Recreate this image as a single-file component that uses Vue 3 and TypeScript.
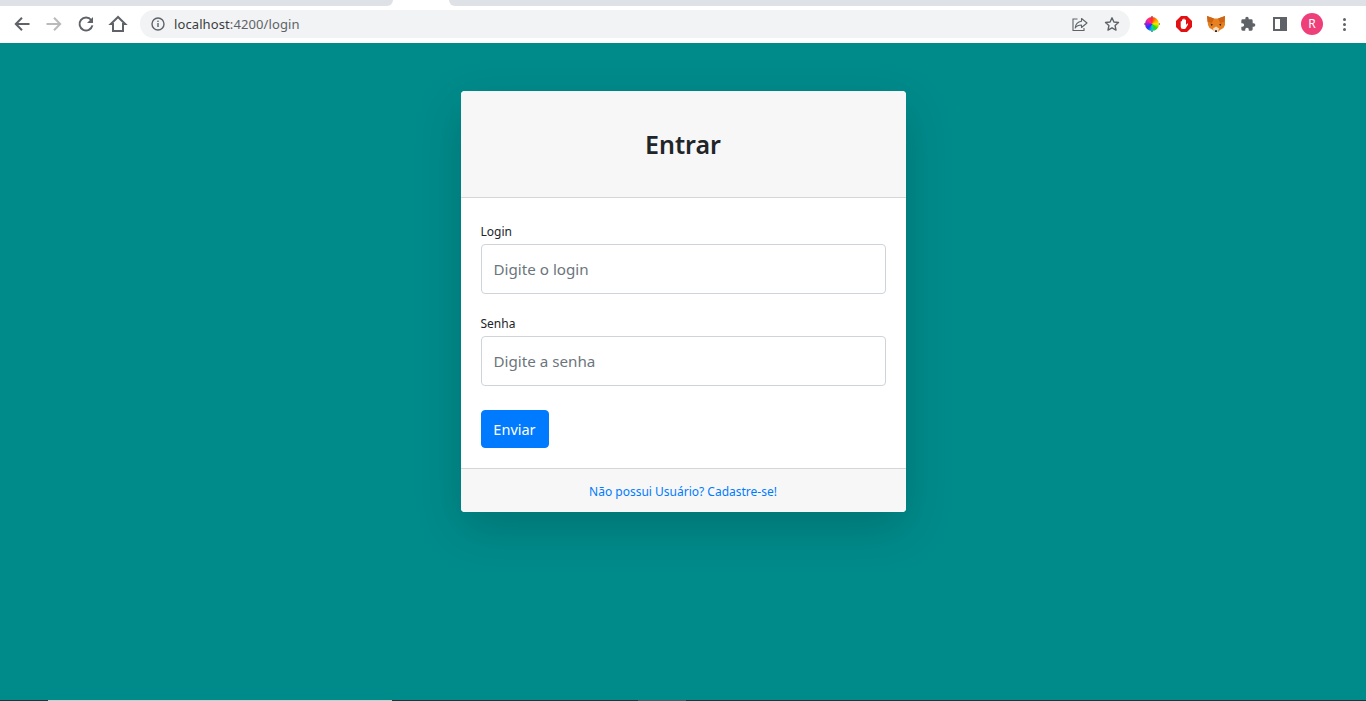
<script setup lang="ts">
const url = { host: 'localhost', rest: ':4200/login' }
</script>

<template>
  <div class="screen">
    <div class="tabstrip">
      <div class="tab-gray left"></div>
      <div class="tab-active"></div>
      <div class="tab-gray right"></div>
    </div>
    <header class="toolbar">
      <div class="nav">
        <svg class="ic" viewBox="0 0 20 20"><path d="M17.500 10H4.500M10 3.800 3.800 10l6.200 6.200" fill="none" stroke="#5f6368" stroke-width="2"/></svg>
        <svg class="ic" viewBox="0 0 20 20"><path d="M2.500 10h13M10 3.800l6.200 6.200-6.200 6.200" fill="none" stroke="#bababa" stroke-width="2"/></svg>
        <svg class="ic" viewBox="0 0 20 20"><path d="M15.200 6A6.500 6.500 0 1 0 16.400 11.400" fill="none" stroke="#5f6368" stroke-width="2"/><path d="M17 3v6h-6z" fill="#5f6368"/></svg>
        <svg class="ic" viewBox="0 0 20 20"><path d="M10 3 2.800 10H5v7h10v-7h2.200z" fill="none" stroke="#5f6368" stroke-width="2" stroke-linejoin="miter"/></svg>
      </div>
      <div class="omnibox">
        <svg class="info" viewBox="0 0 16 16"><circle cx="8" cy="8" r="6" fill="none" stroke="#5f6368" stroke-width="1.4"/><rect x="7.300" y="7" width="1.400" height="4" fill="#5f6368"/><rect x="7.300" y="4.600" width="1.400" height="1.400" fill="#5f6368"/></svg>
        <span class="url"><span class="host">{{ url.host }}</span>{{ url.rest }}</span>
        <span class="spacer"></span>
        <svg class="ic small" viewBox="0 0 16 16"><path d="M9.500 2.500 15 7l-5.500 4.500V9C6.500 9 4.500 10 3.200 12 3.500 8.500 5.500 5.700 9.500 5.200z" fill="none" stroke="#5f6368" stroke-width="1.100" stroke-linejoin="round"/><path d="M5.500 3H1v11.500h11V12" fill="none" stroke="#5f6368" stroke-width="1.100"/></svg>
        <svg class="ic small star" viewBox="0 0 16 16"><path d="m8 1.800 1.900 4.200 4.600.5-3.400 3.100.9 4.500L8 11.800l-4 2.300.9-4.500L1.500 6.500l4.600-.5z" fill="none" stroke="#5f6368" stroke-width="1.400" stroke-linejoin="round"/></svg>
      </div>
      <div class="extensions">
        <div class="ext">
          <div class="wheel-wrap">
            <svg class="wheel-tips" viewBox="0 0 16 16"><path d="M7.200 0h1.600v2H7.200zM7.200 14h1.600v2H7.200zM0 7.200h2v1.600H0zM14 7.200h2v1.600h-2z" fill="#777"/></svg>
            <div class="wheel"></div>
          </div>
        </div>
        <div class="ext">
          <svg class="ext-svg" viewBox="0 0 16 16"><path d="M5 0h6l5 5v6l-5 5H5l-5-5V5z" fill="#e20f13"/><path d="M4.700 8.500V5.500a.7.7 0 0 1 1.300 0V7.500V3.800a.7.7 0 0 1 1.300 0V7V3.200a.7.7 0 0 1 1.400 0V7V3.900a.7.7 0 0 1 1.300 0V9l1-1.200c.6-.6 1.400 0 1 .6L9.800 12.300a1.600 1.600 0 0 1-1.300.7H7a2.300 2.300 0 0 1-2.300-2.300z" fill="#fff"/></svg>
        </div>
        <div class="ext">
          <svg class="ext-svg fox" viewBox="0 0 18 16"><path d="M0 0 7 2.500h4L18 0v9l-1.500 3-3.500 2-2 2H8l-2-2-3.500-2L1 9z" fill="#e8801f"/><path d="M0 0 7 2.500 5 7 .6 6z" fill="#cf6415"/><path d="M18 0 11 2.500 13 7l4.400-1z" fill="#cf6415"/><path d="M6 12.500 9 10.500l3 2-1 3.500H7z" fill="#f3d9bf"/><path d="M3.500 7.500l2.500 1-1.500 1.500z M14.500 7.500l-2.500 1 1.500 1.500z" fill="#33261c"/><path d="M8 14.200h2V16H8z" fill="#33261c"/></svg>
        </div>
        <div class="ext">
          <svg class="ext-svg puzzle" viewBox="0 0 24 24"><path d="M20.500 11H19V7a2 2 0 0 0-2-2h-4V3.500a2.500 2.500 0 0 0-5 0V5H4a2 2 0 0 0-2 2v3.800h1.500a2.700 2.700 0 0 1 0 5.400H2V20a2 2 0 0 0 2 2h3.800v-1.500a2.700 2.700 0 0 1 5.400 0V22H17a2 2 0 0 0 2-2v-4h1.500a2.500 2.500 0 0 0 0-5z" fill="#5f6368"/></svg>
        </div>
        <div class="ext"><div class="sidepanel"><div class="sidepanel-open"></div></div></div>
        <div class="ext"><div class="avatar">R</div></div>
        <div class="ext kebab"><i></i><i></i><i></i></div>
      </div>
    </header>
    <main class="page">
      <section class="card">
        <div class="card-header"><h1>Entrar</h1></div>
        <div class="card-body">
          <div class="group">
            <label for="login">Login</label>
            <input id="login" type="text" placeholder="Digite o login" />
          </div>
          <div class="group">
            <label for="senha">Senha</label>
            <input id="senha" type="password" placeholder="Digite a senha" />
          </div>
          <button type="button">Enviar</button>
        </div>
        <div class="card-footer"><a href="#">Não possui Usuário? Cadastre-se!</a></div>
      </section>
    </main>
    <div class="taskbar">
      <div class="tb dark a"></div>
      <div class="tb light"></div>
      <div class="tb dark b"></div>
      <div class="tb mid"></div>
      <div class="tb dark c"></div>
    </div>
  </div>
</template>

<style>
html, body { margin: 0; padding: 0; overflow: hidden; }
</style>

<style scoped>
.screen {
  width: 1366px;
  height: 701px;
  display: flex;
  flex-direction: column;
  font-family: "Noto Sans", "Open Sans", sans-serif;
  overflow: hidden;
}
.tabstrip { height: 6px; display: flex; background: #fff; flex: none; }
.tab-gray { background: #dee1e6; height: 6px; }
.tab-gray.left { width: 393px; border-bottom-right-radius: 6px; }
.tab-active { width: 56px; background: #fff; }
.tab-gray.right { flex: 1; border-bottom-left-radius: 6px; }
.toolbar {
  height: 37px;
  background: #fff;
  display: flex;
  align-items: center;
  flex: none;
  box-sizing: border-box;
  padding-bottom: 1px;
}
.nav { display: flex; width: 140px; padding-left: 12px; box-sizing: border-box; gap: 12px; align-items: center; }
.ic { width: 20px; height: 20px; display: block; }
.omnibox {
  width: 990px;
  height: 28px;
  background: #f1f3f4;
  border-radius: 14px;
  display: flex;
  align-items: center;
  padding: 0 10px 0 10px;
  box-sizing: border-box;
}
.info { width: 16px; height: 16px; margin-right: 8px; }
.url { font-size: 13px; color: #5f6368; letter-spacing: 0.1px; }
.host { color: #3a3c40; }
.spacer { flex: 1; }
.ic.small { width: 16px; height: 16px; }
.ic.star { margin-left: 16px; }
.extensions { display: flex; align-items: center; padding-left: 6px; }
.ext { width: 32px; height: 28px; display: flex; align-items: center; justify-content: center; }
.wheel-wrap { width: 16px; height: 16px; display: grid; place-items: center; }
.wheel-wrap > * { grid-area: 1 / 1; }
.wheel {
  width: 14px;
  height: 14px;
  border-radius: 50%;
  background: conic-gradient(#ff2a2a, #ff9a00, #f7ee00, #2fd800, #00d0d0, #1a3cff, #9a18e0, #ff2a8a, #ff2a2a);
}
.wheel-tips { width: 16px; height: 16px; display: block; }
.ext-svg { width: 16px; height: 16px; display: block; }
.fox { width: 18px; height: 16px; }
.puzzle { width: 16px; height: 16px; }
.sidepanel { width: 14px; height: 14px; box-sizing: border-box; border: 2px solid #5f6368; display: flex; justify-content: flex-end; }
.sidepanel-open { width: 5px; background: #5f6368; }
.avatar {
  width: 22px;
  height: 22px;
  border-radius: 50%;
  background: #ee3f7a;
  color: #fff;
  font-size: 12px;
  line-height: 22px;
  text-align: center;
}
.kebab { flex-direction: column; gap: 2px; }
.kebab i { width: 3px; height: 3px; border-radius: 50%; background: #5f6368; display: block; }
.page {
  flex: 1;
  background: #008b8b;
  display: flex;
  justify-content: center;
  align-items: flex-start;
  padding-top: 48px;
}
.card {
  width: 445px;
  background: #fff;
  border-radius: 4px;
  box-shadow: 0 16px 48px rgba(0, 0, 0, .175);
  overflow: hidden;
}
.card-header {
  height: 107px;
  box-sizing: border-box;
  background: #f7f7f7;
  border-bottom: 1px solid #d6d6d6;
  display: flex;
  align-items: center;
  justify-content: center;
}
h1 { margin: 0; font-size: 25px; font-weight: 600; color: #212529; line-height: 1.2; }
.card-body { padding: 20px; display: flex; flex-direction: column; align-items: flex-start; height: 270px; box-sizing: border-box; }
.group { width: 100%; margin-bottom: 16px; display: flex; flex-direction: column; }
label { font-size: 12px; line-height: 18px; height: 18px; color: #212529; margin-top: 5px; margin-bottom: 3px; }
input {
  height: 50px;
  box-sizing: border-box;
  width: 405px;
  border: 1px solid #ced4da;
  border-radius: 4px;
  padding: 0 12px;
  font-family: inherit;
  font-size: 15.2px;
  color: #495057;
  outline: none;
}
input::placeholder { color: #6c757d; opacity: 1; }
button {
  width: 68px;
  height: 38px;
  margin-top: 8px;
  background: #007bff;
  border: 1px solid #007bff;
  border-radius: 4px;
  color: #fff;
  font-family: inherit;
  font-size: 14.5px;
  padding: 0;
}
.card-footer {
  height: 44px;
  box-sizing: border-box;
  background: #f7f7f7;
  border-top: 1px solid #d6d6d6;
  display: flex;
  align-items: center;
  justify-content: center;
  padding-top: 2px;
}
a { color: #007bff; text-decoration: none; font-size: 12px; }
.taskbar { height: 1px; display: flex; flex: none; }
.tb { height: 1px; }
.tb.dark { background: #22313a; }
.tb.a { width: 48px; }
.tb.light { width: 344px; background: #c9cfcf; }
.tb.b { width: 246px; }
.tb.mid { width: 48px; background: #4a5a60; }
.tb.c { flex: 1; }
</style>
